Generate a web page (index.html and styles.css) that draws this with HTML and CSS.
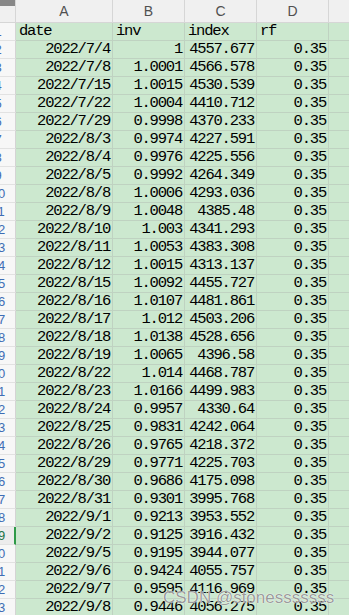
FILE: index.html
```html
<!DOCTYPE html>
<html>
<head>
<meta charset="utf-8">
<link rel="stylesheet" href="styles.css">
</head>
<body>
<div class="sheet">
  <div class="row head">
    <div class="rn corner"><span class="corner-mark"></span></div>
    <div class="c a">A</div><div class="c b">B</div><div class="c c3">C</div><div class="c d">D</div><div class="c e"></div>
  </div>
  <div class="row"><div class="rn"><span>1</span></div><div class="c a l">date</div><div class="c b l">inv</div><div class="c c3 l">index</div><div class="c d l">rf</div><div class="c e"></div></div>
  <div class="row"><div class="rn"><span>2</span></div><div class="c a">2022/7/4</div><div class="c b">1</div><div class="c c3">4557.677</div><div class="c d">0.35</div><div class="c e"></div></div>
  <div class="row"><div class="rn"><span>3</span></div><div class="c a">2022/7/8</div><div class="c b">1.0001</div><div class="c c3">4566.578</div><div class="c d">0.35</div><div class="c e"></div></div>
  <div class="row"><div class="rn"><span>4</span></div><div class="c a">2022/7/15</div><div class="c b">1.0015</div><div class="c c3">4530.539</div><div class="c d">0.35</div><div class="c e"></div></div>
  <div class="row"><div class="rn"><span>5</span></div><div class="c a">2022/7/22</div><div class="c b">1.0004</div><div class="c c3">4410.712</div><div class="c d">0.35</div><div class="c e"></div></div>
  <div class="row"><div class="rn"><span>6</span></div><div class="c a">2022/7/29</div><div class="c b">0.9998</div><div class="c c3">4370.233</div><div class="c d">0.35</div><div class="c e"></div></div>
  <div class="row"><div class="rn"><span>7</span></div><div class="c a">2022/8/3</div><div class="c b">0.9974</div><div class="c c3">4227.591</div><div class="c d">0.35</div><div class="c e"></div></div>
  <div class="row"><div class="rn"><span>8</span></div><div class="c a">2022/8/4</div><div class="c b">0.9976</div><div class="c c3">4225.556</div><div class="c d">0.35</div><div class="c e"></div></div>
  <div class="row"><div class="rn"><span>9</span></div><div class="c a">2022/8/5</div><div class="c b">0.9992</div><div class="c c3">4264.349</div><div class="c d">0.35</div><div class="c e"></div></div>
  <div class="row"><div class="rn"><span>10</span></div><div class="c a">2022/8/8</div><div class="c b">1.0006</div><div class="c c3">4293.036</div><div class="c d">0.35</div><div class="c e"></div></div>
  <div class="row"><div class="rn"><span>11</span></div><div class="c a">2022/8/9</div><div class="c b">1.0048</div><div class="c c3">4385.48</div><div class="c d">0.35</div><div class="c e"></div></div>
  <div class="row"><div class="rn"><span>12</span></div><div class="c a">2022/8/10</div><div class="c b">1.003</div><div class="c c3">4341.293</div><div class="c d">0.35</div><div class="c e"></div></div>
  <div class="row"><div class="rn"><span>13</span></div><div class="c a">2022/8/11</div><div class="c b">1.0053</div><div class="c c3">4383.308</div><div class="c d">0.35</div><div class="c e"></div></div>
  <div class="row"><div class="rn"><span>14</span></div><div class="c a">2022/8/12</div><div class="c b">1.0015</div><div class="c c3">4313.137</div><div class="c d">0.35</div><div class="c e"></div></div>
  <div class="row"><div class="rn"><span>15</span></div><div class="c a">2022/8/15</div><div class="c b">1.0092</div><div class="c c3">4455.727</div><div class="c d">0.35</div><div class="c e"></div></div>
  <div class="row"><div class="rn"><span>16</span></div><div class="c a">2022/8/16</div><div class="c b">1.0107</div><div class="c c3">4481.861</div><div class="c d">0.35</div><div class="c e"></div></div>
  <div class="row"><div class="rn"><span>17</span></div><div class="c a">2022/8/17</div><div class="c b">1.012</div><div class="c c3">4503.206</div><div class="c d">0.35</div><div class="c e"></div></div>
  <div class="row"><div class="rn"><span>18</span></div><div class="c a">2022/8/18</div><div class="c b">1.0138</div><div class="c c3">4528.656</div><div class="c d">0.35</div><div class="c e"></div></div>
  <div class="row"><div class="rn"><span>19</span></div><div class="c a">2022/8/19</div><div class="c b">1.0065</div><div class="c c3">4396.58</div><div class="c d">0.35</div><div class="c e"></div></div>
  <div class="row"><div class="rn"><span>20</span></div><div class="c a">2022/8/22</div><div class="c b">1.014</div><div class="c c3">4468.787</div><div class="c d">0.35</div><div class="c e"></div></div>
  <div class="row"><div class="rn"><span>21</span></div><div class="c a">2022/8/23</div><div class="c b">1.0166</div><div class="c c3">4499.983</div><div class="c d">0.35</div><div class="c e"></div></div>
  <div class="row"><div class="rn"><span>22</span></div><div class="c a">2022/8/24</div><div class="c b">0.9957</div><div class="c c3">4330.64</div><div class="c d">0.35</div><div class="c e"></div></div>
  <div class="row"><div class="rn"><span>23</span></div><div class="c a">2022/8/25</div><div class="c b">0.9831</div><div class="c c3">4242.064</div><div class="c d">0.35</div><div class="c e"></div></div>
  <div class="row"><div class="rn"><span>24</span></div><div class="c a">2022/8/26</div><div class="c b">0.9765</div><div class="c c3">4218.372</div><div class="c d">0.35</div><div class="c e"></div></div>
  <div class="row"><div class="rn"><span>25</span></div><div class="c a">2022/8/29</div><div class="c b">0.9771</div><div class="c c3">4225.703</div><div class="c d">0.35</div><div class="c e"></div></div>
  <div class="row"><div class="rn"><span>26</span></div><div class="c a">2022/8/30</div><div class="c b">0.9686</div><div class="c c3">4175.098</div><div class="c d">0.35</div><div class="c e"></div></div>
  <div class="row"><div class="rn"><span>27</span></div><div class="c a">2022/8/31</div><div class="c b">0.9301</div><div class="c c3">3995.768</div><div class="c d">0.35</div><div class="c e"></div></div>
  <div class="row"><div class="rn"><span>28</span></div><div class="c a">2022/9/1</div><div class="c b">0.9213</div><div class="c c3">3953.552</div><div class="c d">0.35</div><div class="c e"></div></div>
  <div class="row"><div class="rn sel"><span>29</span></div><div class="c a">2022/9/2</div><div class="c b">0.9125</div><div class="c c3">3916.432</div><div class="c d">0.35</div><div class="c e"></div></div>
  <div class="row"><div class="rn"><span>30</span></div><div class="c a">2022/9/5</div><div class="c b">0.9195</div><div class="c c3">3944.077</div><div class="c d">0.35</div><div class="c e"></div></div>
  <div class="row"><div class="rn"><span>31</span></div><div class="c a">2022/9/6</div><div class="c b">0.9424</div><div class="c c3">4055.757</div><div class="c d">0.35</div><div class="c e"></div></div>
  <div class="row"><div class="rn"><span>32</span></div><div class="c a">2022/9/7</div><div class="c b">0.9595</div><div class="c c3">4116.969</div><div class="c d">0.35</div><div class="c e"></div></div>
  <div class="row"><div class="rn"><span>33</span></div><div class="c a">2022/9/8</div><div class="c b">0.9446</div><div class="c c3">4056.275</div><div class="c d">0.35</div><div class="c e"></div></div>
  <div class="watermark">CSDN @stonesssssss</div>
</div>
</body>
</html>
```

FILE: styles.css
```css
html, body {
  margin: 0;
  padding: 0;
  background: #cce8cf;
}
.sheet {
  position: relative;
  width: 349px;
  height: 615px;
  overflow: hidden;
  background: #cce8cf;
}
.row {
  display: flex;
  height: 18px;
}
.row.head {
  height: 23px;
}
.c, .rn {
  box-sizing: border-box;
  flex: none;
  height: 100%;
  border-right: 1px solid #bfd2c1;
  border-bottom: 1px solid #bfd2c1;
  font-family: "Liberation Mono", "DejaVu Sans Mono", monospace;
  font-size: 15.5px;
  letter-spacing: -1.2px;
  color: #000;
  text-align: right;
  padding: 0 2px 0 2px;
  line-height: 17px;
  white-space: nowrap;
  overflow: hidden;
}
.c.l {
  text-align: left;
  padding-left: 3px;
}
.a { width: 97px; }
.b, .c3, .d { width: 72px; }
.e { flex: 1 1 auto; border-right: none; }

.rn {
  width: 16px;
  background: #f7f7f7;
  border-right-color: #d4d4d4;
  border-bottom-color: #e2e2e2;
  position: relative;
  padding: 0;
  font-family: "Liberation Sans", Arial, sans-serif;
  font-size: 13px;
  letter-spacing: 0;
  color: #3e6db5;
  line-height: 17px;
}
.rn span {
  position: absolute;
  left: -22px;
  width: 40px;
  top: 0;
  text-align: center;
}
.rn.sel {
  background: #ececec;
  border-right: 2px solid #2f9a48;
  color: #217346;
}
.head .c, .head .rn {
  background: #f0f0f0;
  border-right-color: #d6d6d6;
  border-bottom-color: #d6d6d6;
  font-family: "Liberation Sans", Arial, sans-serif;
  font-size: 14px;
  letter-spacing: 0;
  color: #505050;
  text-align: center;
  line-height: 22px;
}
.corner-mark {
  position: absolute;
  left: 0;
  top: 9px;
  width: 2px;
  height: 6px;
  background: #888;
}
.watermark {
  position: absolute;
  left: 163px;
  top: 588px;
  font-family: "Liberation Sans", Arial, sans-serif;
  font-size: 17px;
  color: rgba(110, 110, 110, 0.7);
  text-shadow: 0 0 1px #fff, 0 0 1px #fff;
  white-space: nowrap;
}
```
